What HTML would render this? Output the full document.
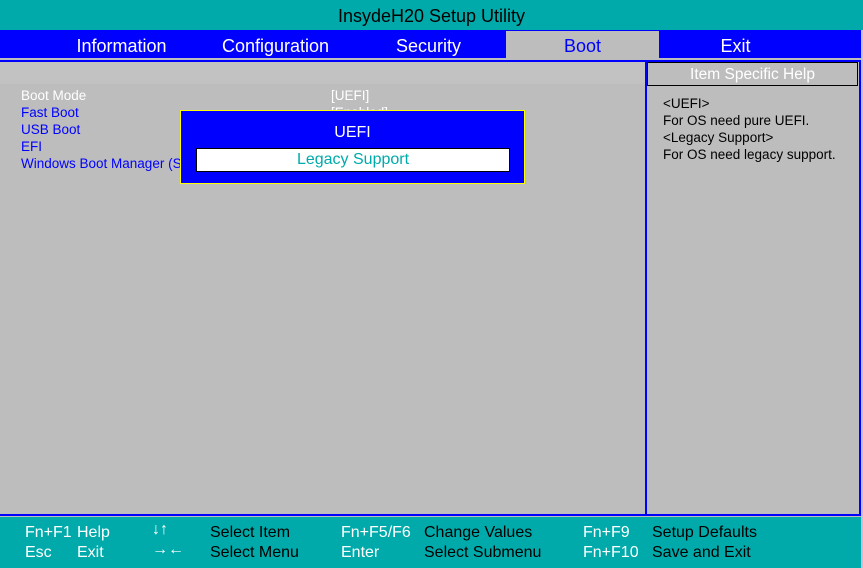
<!DOCTYPE html>
<html><head><meta charset="utf-8"><style>
*{margin:0;padding:0;box-sizing:border-box}
body{width:863px;height:568px;background:#bdbdbd;position:relative;overflow:hidden;font-family:"Liberation Sans",sans-serif}
.a{position:absolute;white-space:nowrap}
.t{font-size:13.5px;line-height:17px}
.f{font-size:16px;color:#fff;line-height:20px}
</style></head><body>
<div class="a" style="left:0;top:0;width:863px;height:30px;background:#00aaaa;color:#000;font-size:18px;text-align:center;line-height:32px">InsydeH20 Setup Utility</div>
<div class="a" style="left:0;top:30px;width:861px;height:28px;background:#0000ff"></div>
<div class="a" style="left:861px;top:30px;width:2px;height:538px;background:#c0c0e0"></div>
<div class="a" style="left:506px;top:31px;width:153px;height:27px;background:#bdbdbd"></div>
<div class="a" style="left:45px;top:30px;width:153px;font-size:18px;line-height:32px;text-align:center;color:#fff">Information</div>
<div class="a" style="left:199px;top:30px;width:153px;font-size:18px;line-height:32px;text-align:center;color:#fff">Configuration</div>
<div class="a" style="left:352px;top:30px;width:153px;font-size:18px;line-height:32px;text-align:center;color:#fff">Security</div>
<div class="a" style="left:506px;top:30px;width:153px;font-size:18px;line-height:32px;text-align:center;color:#0000ff">Boot</div>
<div class="a" style="left:659px;top:30px;width:153px;font-size:18px;line-height:32px;text-align:center;color:#fff">Exit</div>
<div class="a" style="left:-2px;top:60px;width:863px;height:456px;border:2px solid #0000ff;background:#bdbdbd"></div>
<div class="a" style="left:0;top:62px;width:645px;height:22px;background:#c2c2c2"></div>
<div class="a" style="left:645px;top:61px;width:2px;height:454px;background:#0000ff"></div>
<div class="a" style="left:647px;top:62px;width:211px;height:24px;border:1px solid #000;color:#fff;font-size:15.5px;text-align:center;line-height:23px">Item Specific Help</div>
<div class="a t" style="left:663px;top:95px;color:#000">&lt;UEFI&gt;<br>For OS need pure UEFI.<br>&lt;Legacy Support&gt;<br>For OS need legacy support.</div>
<div class="a t" style="left:21px;top:87px;color:#fff">Boot Mode</div>
<div class="a t" style="left:21px;top:104px;color:#0000ff">Fast Boot<br>USB Boot<br>EFI<br>Windows Boot Manager (S</div>
<div class="a t" style="left:331px;top:87px;color:#fff">[UEFI]<br>[Enabled]</div>
<div class="a" style="left:180px;top:110px;width:345px;height:74px;background:#0000ff;border:1px solid #ffff00"></div>
<div class="a" style="left:180px;top:124px;width:345px;text-align:center;color:#fff;font-size:16px">UEFI</div>
<div class="a" style="left:196px;top:148px;width:314px;height:24px;background:#fff;border:1px solid #000;color:#00aaaa;font-size:16px;text-align:center;line-height:21px">Legacy Support</div>
<div class="a" style="left:0;top:517px;width:861px;height:51px;background:#00aaaa"></div>
<div class="a f" style="left:25px;top:523px">Fn+F1<br>Esc</div>
<div class="a f" style="left:77px;top:523px">Help<br>Exit</div>
<div class="a f" style="left:152px;top:520px;font-size:16px">↓↑<br>→←</div>
<div class="a f" style="left:210px;top:523px;color:#000">Select Item<br>Select Menu</div>
<div class="a f" style="left:341px;top:523px">Fn+F5/F6<br>Enter</div>
<div class="a f" style="left:424px;top:523px;color:#000">Change Values<br>Select Submenu</div>
<div class="a f" style="left:583px;top:523px">Fn+F9<br>Fn+F10</div>
<div class="a f" style="left:652px;top:523px;color:#000">Setup Defaults<br>Save and Exit</div>
</body></html>
